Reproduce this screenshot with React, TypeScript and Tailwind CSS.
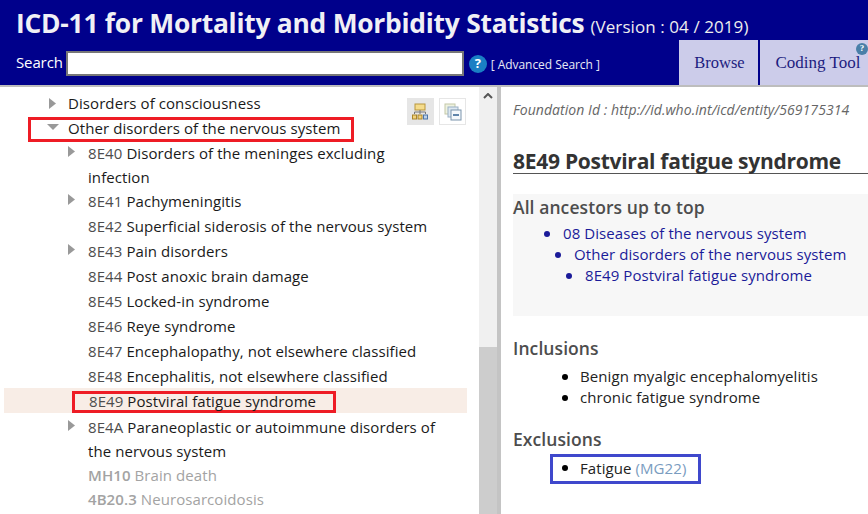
const font = { fontFamily: '"Open Sans", "Noto Sans", sans-serif' };

function Arrow({ open }: { open?: boolean }) {
  return (
    <svg width="12" height="12" viewBox="0 0 12 12" className="shrink-0">
      {open ? <path d="M0 2h12L6 8z" fill="#999" /> : <path d="M2 0l7 5.5L2 11z" fill="#999" />}
    </svg>
  );
}

function TreeRow({
  code,
  text,
  more,
  arrow,
  muted,
  tight,
}: {
  code: string;
  text: string;
  more?: string;
  arrow?: boolean;
  muted?: boolean;
  tight?: boolean;
}) {
  return (
    <div className={tight ? "flex pl-[66px] pr-[20px] leading-[24px]" : "flex pl-[66px] pr-[20px] leading-[25px]"}>
      <div className="w-[22px] shrink-0 pt-[5px]">{arrow && <Arrow />}</div>
      <div className={muted ? "text-[#a3a3a3]" : "text-[#1a1a1a]"}>
        <div className="whitespace-nowrap">
          <span className={muted ? "font-semibold" : "text-[#4d4d4d] font-medium"}>{code}</span> {text}
        </div>
        {more && <div>{more}</div>}
      </div>
    </div>
  );
}

function Toolbar() {
  return (
    <div className="absolute right-[13px] top-[11px] flex gap-[5px]">
      <div className="w-[27px] h-[27px] bg-[#e6e6e6] flex items-center justify-center">
        <svg width="17" height="18" viewBox="0 0 17 18">
          <rect x="3" y="1" width="10" height="6" fill="#f5dc8c" stroke="#b8963c" />
          <path d="M8 7v4M2.5 11V9h11v2" stroke="#777" fill="none" />
          <rect x="0.5" y="12" width="4" height="4" fill="#f2d27a" stroke="#a8842c" />
          <rect x="6" y="12" width="4" height="4" fill="#f2d27a" stroke="#a8842c" />
          <rect x="11.5" y="12" width="4" height="4" fill="#bcd0e8" stroke="#4a74a8" />
        </svg>
      </div>
      <div className="w-[27px] h-[27px] bg-white border border-[#e6e6e6] flex items-center justify-center">
        <svg width="18" height="18" viewBox="0 0 18 18">
          <rect x="1" y="1" width="10" height="10" fill="#eef2e0" stroke="#c4c8a8" />
          <rect x="4" y="4" width="10" height="10" fill="#dde8f2" stroke="#9ab0c4" />
          <rect x="7" y="7" width="10" height="10" fill="#f4f8fc" stroke="#7a94ac" />
          <path d="M9 12h6" stroke="#2f5f90" strokeWidth="1.5" />
        </svg>
      </div>
    </div>
  );
}

export default function App() {
  return (
    <div className="w-[868px] h-[514px] overflow-hidden bg-white flex flex-col text-[15px] tracking-[0.08px]" style={font}>
      {/* Header */}
      <header className="h-[85px] bg-[#00008b] shrink-0 flex flex-col text-white relative">
        <div className="h-[40px] pl-[16px] flex items-baseline">
          <h1 className="text-[26.4px] font-bold leading-[46px] text-[#f0f0f5] tracking-[-0.25px]">ICD-11 for Mortality and Morbidity Statistics</h1>
          <span className="ml-[6px] text-[17px] text-[#eee]">(Version : 04 / 2019)</span>
        </div>
        <div className="flex-1 flex">
          <div className="flex-1 flex items-center pl-[16px] pt-[1px]">
            <span className="text-[15px] mr-[3px] tracking-[-0.12px] pb-[2px]">Search</span>
            <input className="w-[398px] h-[25px] bg-white border-2 border-[#777] outline-none" />
            <div className="ml-[5px] mt-[1px] w-[18px] h-[18px] rounded-full bg-[#1a7fc4] text-white text-[13px] font-bold flex items-center justify-center">?</div>
            <a className="ml-[4px] text-[12px] text-[#e8e8f5] tracking-[-0.05px] pt-[3px]">[ Advanced Search ]</a>
          </div>
          <nav className="flex self-end h-[45px] gap-[2px]" style={{ fontFamily: '"Liberation Serif", serif' }}>
            <div className="w-[79px] bg-[#ccccea] text-[#1c1c80] text-[16.5px] tracking-normal flex items-center justify-center pl-[2px] pt-[1px]">Browse</div>
            <div className="w-[108px] bg-[#ccccea] text-[#1c1c80] text-[17px] tracking-normal flex items-center justify-center pl-[8px] pt-[1px] relative">
              Coding Tool
              <span className="absolute right-0 top-[3px] w-[12px] h-[12px] rounded-full bg-[#4a7fa8] text-white text-[9px] font-bold flex items-center justify-center">?</span>
            </div>
          </nav>
        </div>
      </header>
      <div className="h-[2px] bg-[#bdbdbd] shrink-0" />

      <div className="flex-1 flex min-h-0">
        {/* Tree */}
        <div className="w-[479px] shrink-0 relative pt-[4px] overflow-hidden">
          <Toolbar />
          <div className="flex items-center pl-[47px] leading-[25px] text-[#1a1a1a]">
            <div className="w-[21px]"><Arrow /></div>Disorders of consciousness
          </div>
          <div className="ml-[28px] mt-[1px] w-[326px] h-[25px] border-[3px] border-[#ee1c25] flex items-center pl-[17px] text-[#1a1a1a] leading-[18px] pb-[3px]">
            <div className="w-[21px] -ml-[1px]"><Arrow open /></div>Other disorders of the nervous system
          </div>
          <div className="-mt-px">
            <TreeRow tight arrow code="8E40" text="Disorders of the meninges excluding" more="infection" />
            <TreeRow arrow code="8E41" text="Pachymeningitis" />
            <TreeRow code="8E42" text="Superficial siderosis of the nervous system" />
            <TreeRow arrow code="8E43" text="Pain disorders" />
            <TreeRow code="8E44" text="Post anoxic brain damage" />
            <TreeRow code="8E45" text="Locked-in syndrome" />
            <TreeRow code="8E46" text="Reye syndrome" />
            <TreeRow code="8E47" text="Encephalopathy, not elsewhere classified" />
            <TreeRow code="8E48" text="Encephalitis, not elsewhere classified" />
          </div>
          <div className="ml-[4px] mr-[12px] -mt-px mb-[2px] h-[25px] bg-[#f8ede6] flex items-end">
            <div className="ml-[68px] w-[264px] h-[22px] border-[3px] border-[#ee1c25] flex items-center pl-[14px] text-[#1a1a1a] leading-[16px] pb-[2px]">
              <span><span className="text-[#4d4d4d] font-medium">8E49</span> Postviral fatigue syndrome</span>
            </div>
          </div>
          <TreeRow tight arrow code="8E4A" text="Paraneoplastic or autoimmune disorders of" more="the nervous system" />
          <TreeRow tight muted code="MH10" text="Brain death" />
          <TreeRow muted code="4B20.3" text="Neurosarcoidosis" />
        </div>

        {/* Scrollbar */}
        <div className="w-[18px] shrink-0 bg-[#f0f0f0] flex flex-col items-center justify-between">
          <svg width="10" height="6" viewBox="0 0 10 6" className="mt-[6px]"><path d="M1 5l4-4 4 4" stroke="#555" strokeWidth="2" fill="none" /></svg>
          <div className="w-full h-[167px] bg-[#cdcdcd]" />
        </div>
        <div className="w-[5px] shrink-0 bg-white border-l-[4px] border-[#c4c4c4]" />

        {/* Details */}
        <div className="flex-1 min-w-0 pl-[11px] text-[#333] whitespace-nowrap">
          <p className="italic text-[14px] text-[#666] pt-[13px] tracking-[0.06px] leading-[20px]">Foundation Id : http://id.who.int/icd/entity/569175314</p>
          <h2 className="mt-[27px] text-[21px] font-bold text-[#333] border-b border-[#555] leading-[28px] h-[27px] tracking-[-0.27px]">8E49 Postviral fatigue syndrome</h2>
          <section className="mt-[20px] h-[122px] bg-[#f7f7f7] pt-[1px]">
            <h3 className="text-[17.5px] font-semibold text-[#4d4d4d] leading-[24px]">All ancestors up to top</h3>
            <ul className="text-[#1b1b99] leading-[21px] pt-[4px]">
              <li className="ml-[31px] flex items-center"><span className="w-[6px] h-[6px] rounded-full bg-[#1b1b99] mr-[13px]" />08 Diseases of the nervous system</li>
              <li className="ml-[42px] flex items-center"><span className="w-[6px] h-[6px] rounded-full bg-[#1b1b99] mr-[13px]" />Other disorders of the nervous system</li>
              <li className="ml-[53px] flex items-center"><span className="w-[6px] h-[6px] rounded-full bg-[#1b1b99] mr-[13px]" />8E49 Postviral fatigue syndrome</li>
            </ul>
          </section>
          <h3 className="mt-[20px] text-[17.5px] font-semibold text-[#4d4d4d] leading-[24px]">Inclusions</h3>
          <ul className="text-[#222] leading-[21px] pt-[6px]">
            <li className="ml-[49px] flex items-center"><span className="w-[6px] h-[6px] rounded-full bg-black mr-[12px]" />Benign myalgic encephalomyelitis</li>
            <li className="ml-[49px] flex items-center"><span className="w-[6px] h-[6px] rounded-full bg-black mr-[12px]" />chronic fatigue syndrome</li>
          </ul>
          <h3 className="mt-[19px] text-[17.5px] font-semibold text-[#4d4d4d] leading-[24px]">Exclusions</h3>
          <div className="ml-[37px] mt-[3px] w-[151px] h-[30px] border-[3px] border-[#3f48cc] flex items-center pl-[9px] pb-[2px] text-[#222]">
            <span className="w-[6px] h-[6px] rounded-full bg-black mr-[12px]" />Fatigue&nbsp;<span className="text-[#7a9cc0]">(MG22)</span>
          </div>
        </div>
      </div>
    </div>
  );
}
